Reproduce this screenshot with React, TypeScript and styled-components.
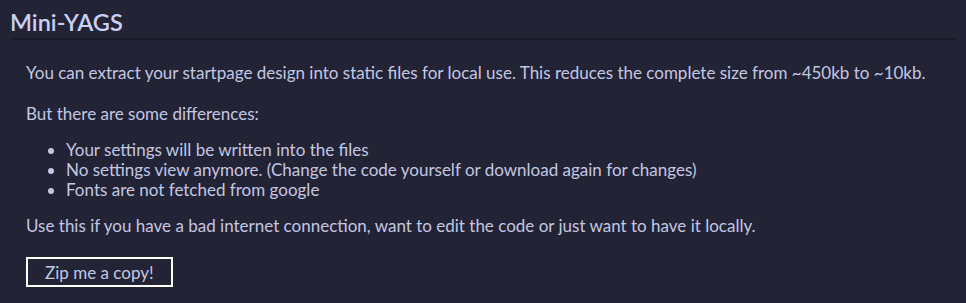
import React from "react";
import styled, { createGlobalStyle } from "styled-components";

const GlobalStyle = createGlobalStyle`
  html, body {
    margin: 0;
    padding: 0;
    background-color: #232336;
  }
  body {
    font-family: "Lato", "Noto Sans", sans-serif;
    color: #c3c7e2;
  }
`;

const Page = styled.div`
  padding: 8px 9px 0 10px;
`;

const Title = styled.h2`
  margin: 0;
  font-size: 23.5px;
  font-weight: 600;
  line-height: 28px;
  color: #c9d0f2;
  padding-bottom: 2px;
  border-bottom: 2px solid #1a1a28;
`;

const Body = styled.div`
  padding: 22px 16px 0 16px;
  font-size: 17px;
`;

const Paragraph = styled.p<{ $gap: number }>`
  margin: 0 0 ${(p) => p.$gap}px 0;
  line-height: 22px;
`;

const List = styled.ul`
  margin: 0 0 15px 0;
  padding-left: 40px;
  line-height: 20px;
`;

const Button = styled.button`
  font-family: inherit;
  font-size: 17px;
  color: #c3c7e2;
  background: transparent;
  border: 2px solid #ffffff;
  padding: 0 17px;
  height: 30px;
  cursor: pointer;
`;

const App = () => {
  return (
    <>
      <GlobalStyle />
      <Page>
        <Title>Mini-YAGS</Title>
        <Body>
          <Paragraph $gap={19}>
            You can extract your startpage design into static files for local use. This reduces
            the complete size from ~450kb to ~10kb.
          </Paragraph>
          <Paragraph $gap={15}>But there are some differences:</Paragraph>
          <List>
            <li>Your settings will be written into the files</li>
            <li>No settings view anymore. (Change the code yourself or download again for changes)</li>
            <li>Fonts are not fetched from google</li>
          </List>
          <Paragraph $gap={20}>
            Use this if you have a bad internet connection, want to edit the code or just want to
            have it locally.
          </Paragraph>
          <Button>Zip me a copy!</Button>
        </Body>
      </Page>
    </>
  );
};

export default App;
